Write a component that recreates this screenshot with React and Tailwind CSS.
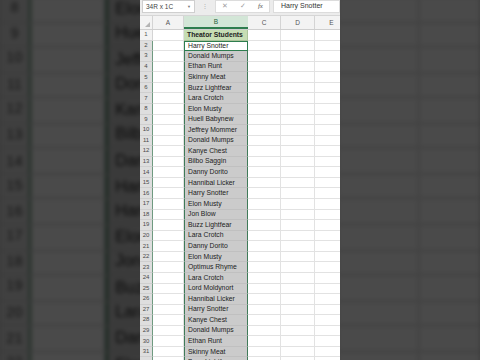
import React from 'react';

const names = [
  'Harry Snotter', 'Donald Mumps', 'Ethan Runt', 'Skinny Meat', 'Buzz Lightfear',
  'Lara Crotch', 'Elon Musty', 'Huell Babynew', 'Jeffrey Mommer', 'Donald Mumps',
  'Kanye Chest', 'Bilbo Saggin', 'Danny Dorito', 'Hannibal Licker', 'Harry Snotter',
  'Elon Musty', 'Jon Blow', 'Buzz Lightfear', 'Lara Crotch', 'Danny Dorito',
  'Elon Musty', 'Optimus Rhyme', 'Lara Crotch', 'Lord Moldynort', 'Hannibal Licker',
  'Harry Snotter', 'Kanye Chest', 'Donald Mumps', 'Ethan Runt', 'Skinny Meat',
  'Buzz Lightfear',
];

const cols = 'grid grid-cols-[13px_31px_64px_33px_34px_34px]';

function Cursor() {
  return (
    <svg className="absolute left-[325px] top-[115px]" width="10" height="10" viewBox="0 0 10 10">
      <path d="M3.5 0.5h3v3h3v3h-3v3h-3v-3h-3v-3h3z" fill="white" stroke="#222" strokeWidth="1" />
    </svg>
  );
}

function Sheet() {
  return (
    <div className="relative w-[200px] h-[360px] overflow-hidden bg-white font-['Liberation_Sans',Arial,sans-serif] text-[#222]">
      {/* formula bar */}
      <div className="h-[16px] bg-[#ececec] border-b border-[#d6d6d6] flex items-start gap-[3px] pl-[2px]">
        <div className="w-[53px] h-[13px] bg-white border border-[#cfcfcf] flex items-center justify-between px-[3px] text-[6.5px] text-[#444]">
          <span>34R x 1C</span>
          <span className="text-[4px] text-[#777]">▼</span>
        </div>
        <div className="w-[14px] h-[13px] flex items-center justify-center text-[6px] text-[#aaa]">⋮</div>
        <div className="w-[55px] h-[13px] bg-white border border-[#dcdcdc] flex items-center justify-around text-[7px] text-[#a0a0a0]">
          <span>✕</span>
          <span>✓</span>
          <span className="italic font-['Liberation_Serif',serif] text-[#555]">fx</span>
        </div>
        <div className="flex-1 h-[13px] bg-white border border-[#dcdcdc] flex items-center pl-[7px] text-[7px] text-[#333] whitespace-nowrap">
          Harry Snotter
        </div>
      </div>

      {/* column headers */}
      <div className={`${cols} h-[14px] bg-[#f3f3f3] border-b border-[#cfcfcf] text-[6.5px] text-[#555]`}>
        <div className="relative border-r border-[#d4d4d4]">
          <svg className="absolute right-[2px] bottom-[2px]" width="5" height="5" viewBox="0 0 5 5">
            <path d="M5 0V5H0z" fill="#b5b5b5" />
          </svg>
        </div>
        <div className="flex items-center justify-center border-r border-[#d4d4d4]">A</div>
        <div className="flex items-center justify-center bg-[#d3e6d7] text-[#1f5f3a] border-b-2 border-[#2e7d4f]">B</div>
        <div className="flex items-center justify-center border-r border-[#d4d4d4]">C</div>
        <div className="flex items-center justify-center border-r border-[#d4d4d4]">D</div>
        <div className="flex items-center justify-center border-r border-[#d4d4d4]">E</div>
      </div>

      {/* row 1 */}
      <div className={`${cols} h-[10.57px] text-[6.8px]`}>
        <div className="flex items-center justify-center bg-[#f3f3f3] border-r border-b border-[#d4d4d4] text-[6px] text-[#555]">1</div>
        <div className="border-r border-b border-[#e2e2e2]" />
        <div className="flex items-center pl-[3px] bg-[#c6ddb4] border-r border-b border-[#aac39a] font-bold whitespace-nowrap overflow-hidden">Theator Students</div>
        <div className="border-r border-b border-[#e2e2e2]" />
        <div className="border-r border-b border-[#e2e2e2]" />
        <div className="border-r border-b border-[#e2e2e2]" />
      </div>

      {names.map((n, i) => (
        <div key={i} className={`${cols} h-[10.57px] text-[6.8px]`}>
          <div className="flex items-center justify-center bg-[#dedede] border-r border-[#6f9a80] border-b border-b-[#cfcfcf] text-[6px] text-[#4a4a4a]">{i + 2}</div>
          <div className="border-r border-b border-[#e2e2e2]" />
          <div
            className={
              i === 0
                ? 'flex items-center pl-[3px] bg-white border border-[#2e7d4f] whitespace-nowrap overflow-hidden'
                : 'flex items-center pl-[3px] bg-[#cbcbcb] border-x border-x-[#3f7a58] border-b border-b-[#c0c0c0] whitespace-nowrap overflow-hidden'
            }
          >
            {n}
          </div>
          <div className="border-r border-b border-[#e2e2e2]" />
          <div className="border-r border-b border-[#e2e2e2]" />
          <div className="border-r border-b border-[#e2e2e2]" />
        </div>
      ))}

      <Cursor />
    </div>
  );
}

export default function App() {
  return (
    <div className="relative w-[480px] h-[360px] overflow-hidden bg-[#3a3a3a]">
      <div className="absolute inset-0 flex justify-center" aria-hidden="true">
        <div className="scale-[2.4] blur-[0.8px] brightness-[0.29]">
          <Sheet />
        </div>
      </div>
      <div className="relative flex justify-center">
        <div className="w-[200px] h-[360px]">
          <Sheet />
        </div>
      </div>
    </div>
  );
}
